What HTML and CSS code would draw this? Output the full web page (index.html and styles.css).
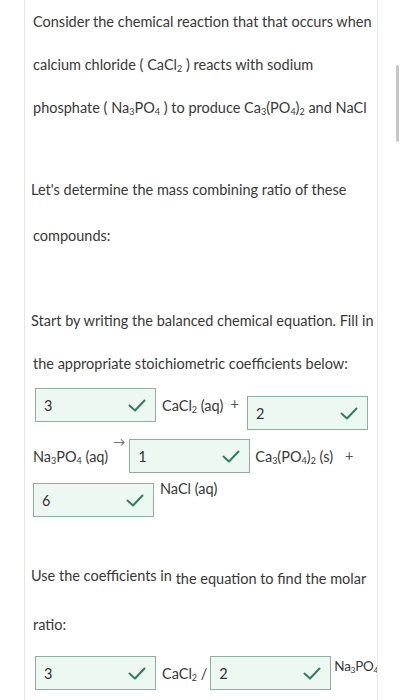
FILE: index.html
```html
<!DOCTYPE html>
<html>
<head>
<meta charset="utf-8">
<link rel="stylesheet" href="styles.css">
</head>
<body>
<div class="page">
  <div class="card">
    <p class="p1">Consider the chemical reaction that that occurs when<br>calcium chloride ( CaCl<sub>2</sub> ) reacts with sodium<br>phosphate ( Na<sub>3</sub>PO<sub>4</sub> ) to produce Ca<sub>3</sub>(PO<sub>4</sub>)<sub>2</sub> and NaCl</p>
    <p class="p2"><span class="out">Let's determine the mass combining ratio of these</span><br>compounds:</p>
    <p class="p3"><span class="out">Start by writing the balanced chemical equation. Fill in</span><br>the appropriate stoichiometric coefficients below:</p>

    <div class="equation">
      <div class="row row1">
        <div class="box b1"><span>3</span><svg class="check" viewBox="0 0 18 13"><path d="M1.5 6.5 L7 11.5 L16.5 1.5"/></svg></div>
        <span class="term t-cacl">CaCl<sub>2</sub> (aq)</span>
        <span class="plus p-a">+</span>
        <div class="box b2"><span>2</span><svg class="check" viewBox="0 0 18 13"><path d="M1.5 6.5 L7 11.5 L16.5 1.5"/></svg></div>
      </div>
      <div class="row row2">
        <span class="term t-na">Na<sub>3</sub>PO<sub>4</sub> (aq)</span>
        <span class="arrow">→</span>
        <div class="box b3"><span>1</span><svg class="check" viewBox="0 0 18 13"><path d="M1.5 6.5 L7 11.5 L16.5 1.5"/></svg></div>
        <span class="term t-ca3">Ca<sub>3</sub>(PO<sub>4</sub>)<sub>2</sub> (s)</span>
        <span class="plus p-b">+</span>
      </div>
      <div class="row row3">
        <div class="box b4"><span>6</span><svg class="check" viewBox="0 0 18 13"><path d="M1.5 6.5 L7 11.5 L16.5 1.5"/></svg></div>
        <span class="term t-nacl">NaCl (aq)</span>
      </div>
    </div>

    <p class="p4"><span class="out">Use the coefficients in <span class="low">the equation to find the molar</span></span><br>ratio:</p>

    <div class="row ratio">
      <div class="box b5"><span>3</span><svg class="check" viewBox="0 0 18 13"><path d="M1.5 6.5 L7 11.5 L16.5 1.5"/></svg></div>
      <span class="term t-rcacl">CaCl<sub>2</sub> /</span>
      <div class="box b6"><span>2</span><svg class="check" viewBox="0 0 18 13"><path d="M1.5 6.5 L7 11.5 L16.5 1.5"/></svg></div>
      <span class="term t-rna">Na<sub>3</sub>PO<sub>4</sub></span>
    </div>
  </div>
  <div class="scroll-thumb"></div>
</div>
</body>
</html>
```

FILE: styles.css
```css
html, body {
  margin: 0;
  padding: 0;
  background: #ffffff;
}

body {
  font-family: "Lato", "Open Sans", sans-serif;
  font-size: 14.5px;
  color: #383838;
}

.page {
  position: relative;
  width: 403px;
  height: 700px;
  overflow: hidden;
}

.card {
  margin-left: 24px;
  width: 354px;
  box-sizing: border-box;
  height: 700px;
  border-left: 1px solid #e6e6e6;
  border-right: 1px solid #e6e6e6;
  padding-left: 8px;
  overflow: hidden;
}

p {
  margin: 0;
  white-space: nowrap;
}

sub {
  font-size: 0.62em;
  vertical-align: -0.2em;
  line-height: 0;
}

.out {
  margin-left: -2px;
}

.p1 {
  line-height: 43px;
}

.p2 {
  margin-top: 38px;
  line-height: 46px;
}

.p3 {
  margin-top: 41px;
  line-height: 42.5px;
}

.p4 {
  margin-top: 36px;
  line-height: 46px;
}

.low {
  vertical-align: -3px;
}

.equation {
  margin-top: 3px;
  display: flex;
  flex-direction: column;
  gap: 9px;
}

.row {
  display: flex;
  align-items: flex-start;
  white-space: nowrap;
}

.row3 {
  margin-top: 1px;
}

.box {
  width: 121px;
  height: 34px;
  box-sizing: border-box;
  border: 1px solid #8eae9f;
  background: #eef8f3;
  display: flex;
  align-items: center;
  justify-content: space-between;
  padding: 0 9px 0 8px;
  flex: none;
  color: #333;
}

.check {
  width: 18px;
  height: 13px;
}

.check path {
  fill: none;
  stroke: #2f7f5f;
  stroke-width: 2;
  stroke-linecap: round;
  stroke-linejoin: round;
}

.term {
  line-height: 20px;
}

.b1 {
  margin-left: 2px;
}

.t-cacl {
  margin-left: 6px;
  margin-top: 8px;
}

.plus {
  line-height: 20px;
  color: #555;
}

.p-a {
  margin-left: 7px;
  margin-top: 6px;
}

.b2 {
  margin-left: 8px;
  margin-top: 8px;
}

.t-na {
  margin-top: 8px;
}

.arrow {
  font-size: 12px;
  line-height: 12px;
  color: #555;
  margin-left: 5px;
  margin-top: -3px;
}

.b3 {
  margin-left: 4px;
}

.t-ca3 {
  margin-left: 5px;
  margin-top: 8px;
}

.p-b {
  margin-left: 12px;
  margin-top: 7px;
}

.t-nacl {
  margin-left: 6px;
  margin-top: -4px;
}

.ratio {
  margin-top: 8px;
}

.b5 {
  margin-left: 2px;
}

.t-rcacl {
  margin-left: 6px;
  margin-top: 8px;
}

.b6 {
  margin-left: 3px;
}

.t-rna {
  margin-left: 3px;
  margin-top: 0px;
  font-size: 13.5px;
  letter-spacing: -0.3px;
}

.scroll-thumb {
  position: absolute;
  left: 396px;
  top: 65px;
  width: 3px;
  height: 77px;
  border-radius: 2px;
  background: #c6c6c6;
}
```
